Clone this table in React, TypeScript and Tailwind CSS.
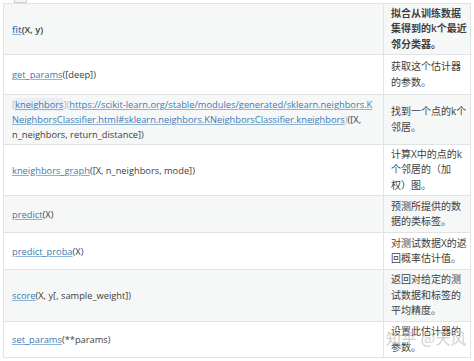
import React from "react";

const L = ({ children }: { children: React.ReactNode }) => (
  <span className="text-[#3b7bb5] underline decoration-[#8fb3d6] underline-offset-[1px]">{children}</span>
);

type Row = { h: string; left: React.ReactNode; right: React.ReactNode; gray: boolean; bold?: boolean };

export default function App() {
  const rows: Row[] = [
    {
      h: "h-[51px]",
      gray: true,
      bold: true,
      left: (
        <>
          <L>fit</L>(X, y)
        </>
      ),
      right: (
        <>
          拟合从训练数据<br />集得到的k个最近<br />邻分类器。
        </>
      ),
    },
    {
      h: "h-[40px]",
      gray: false,
      left: (
        <>
          <L>get_params</L>([deep])
        </>
      ),
      right: (
        <>
          获取这个估计器<br />的参数。
        </>
      ),
    },
    {
      h: "h-[50px]",
      gray: true,
      left: (
        <>
          <span className="text-[#a9bccf]">[</span>
          <span className="text-[#3b7bb5] underline decoration-[#8fb3d6] bg-[#e8eef4]">kneighbors</span>
          <span className="text-[#a9bccf]">](</span>
          <L>https://scikit-learn.org/stable/modules/generated/sklearn.neighbors.K</L>
          <br />
          <L>NeighborsClassifier.html#sklearn.neighbors.KNeighborsClassifier.kneighbors</L>
          <span className="text-[#a9bccf]">)</span>([X,
          <br />
          n_neighbors, return_distance])
        </>
      ),
      right: (
        <>
          找到一个点的k个<br />邻居。
        </>
      ),
    },
    {
      h: "h-[51px]",
      gray: false,
      left: (
        <>
          <L>kneighbors_graph</L>([X, n_neighbors, mode])
        </>
      ),
      right: (
        <>
          计算X中的点的k<br />个邻居的（加<br />权）图。
        </>
      ),
    },
    {
      h: "h-[37px]",
      gray: true,
      left: (
        <>
          <L>predict</L>(X)
        </>
      ),
      right: (
        <>
          预测所提供的数<br />据的类标签。
        </>
      ),
    },
    {
      h: "h-[37px]",
      gray: false,
      left: (
        <>
          <L>predict_proba</L>(X)
        </>
      ),
      right: (
        <>
          对测试数据X的返<br />回概率估计值。
        </>
      ),
    },
    {
      h: "h-[52px]",
      gray: true,
      left: (
        <>
          <L>score</L>(X, y[, sample_weight])
        </>
      ),
      right: (
        <>
          返回对给定的测<br />试数据和标签的<br />平均精度。
        </>
      ),
    },
    {
      h: "h-[36px]",
      gray: false,
      left: (
        <>
          <L>set_params</L>(**params)
        </>
      ),
      right: (
        <>
          设置此估计器的<br />参数。
        </>
      ),
    },
  ];

  return (
    <div
      className="relative w-[474px] h-[361px] overflow-hidden bg-white text-[#404040]"
      style={{ fontFamily: '"Open Sans", "Noto Sans CJK SC", sans-serif' }}
    >
      <div className="h-[3px] pl-[14px]">
        <div className="w-[13px] h-[3px] border-x border-b border-[#cfcfcf] bg-[#f4f4f4]" />
      </div>
      <div className="ml-[3px] w-[468px] border-t border-l border-r border-[#e1e4e5]">
        {rows.map((r, i) => (
          <div
            key={i}
            className={`grid grid-cols-[380px_1fr] border-b border-[#e1e4e5] ${r.h} ${
              r.gray ? "bg-[#f6f7f7]" : "bg-white"
            } ${r.bold ? "font-semibold" : ""}`}
          >
            <div className="flex items-center px-[8px] border-r border-[#e1e4e5] text-[9.3px] leading-[15px] whitespace-nowrap">
              <div>{r.left}</div>
            </div>
            <div className="flex items-center pl-[7px] text-[10px] leading-[15.5px] whitespace-nowrap">
              <div>{r.right}</div>
            </div>
          </div>
        ))}
      </div>
      <div
        className="absolute left-[386px] top-[328px] text-[15px] leading-[20px] text-[#c4c4c4] opacity-80 tracking-[0.5px] whitespace-nowrap"
        style={{ fontFamily: '"Noto Sans CJK SC", sans-serif' }}
      >
        知乎 @天风
      </div>
    </div>
  );
}
